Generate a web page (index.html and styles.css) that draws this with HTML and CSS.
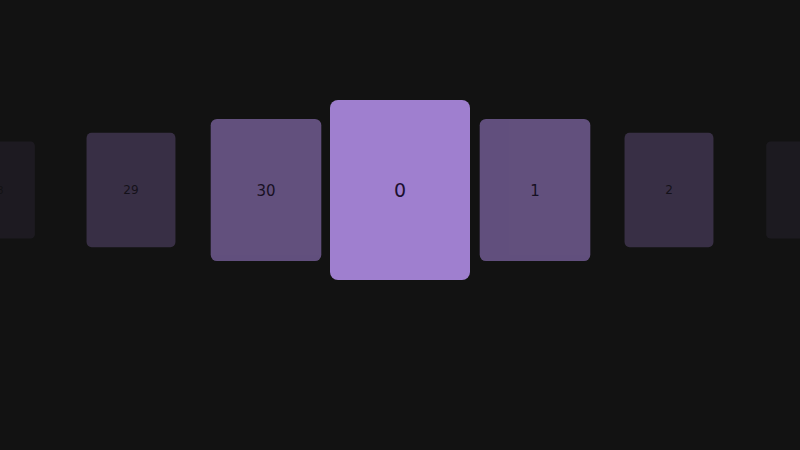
FILE: index.html
```html
<!DOCTYPE html>
<html lang="en">
<head>
<meta charset="utf-8">
<title>Carousel</title>
<link rel="stylesheet" href="styles.css">
</head>
<body>
<main class="stage">
  <div class="track">
    <div class="card far">28</div>
    <div class="card near2">29</div>
    <div class="card near1">30</div>
    <div class="card active">0</div>
    <div class="card near1">1</div>
    <div class="card near2">2</div>
    <div class="card far">3</div>
  </div>
</main>
</body>
</html>
```

FILE: styles.css
```css
html, body {
  margin: 0;
  padding: 0;
  background: #121212;
  width: 800px;
  height: 450px;
  overflow: hidden;
}

.stage {
  width: 800px;
  height: 450px;
  padding-top: 100px;
  box-sizing: border-box;
  overflow: hidden;
}

.track {
  display: flex;
  justify-content: center;
  align-items: center;
  width: 800px;
  height: 180px;
}

.card {
  flex: 0 0 140px;
  width: 140px;
  height: 180px;
  margin: 0 -2.75px;
  border-radius: 8px;
  background: #9f7fcf;
  color: #1c1030;
  font-family: "DejaVu Sans", "Liberation Sans", sans-serif;
  font-size: 19px;
  display: flex;
  align-items: center;
  justify-content: center;
  transform-origin: center center;
}

.active {
  transform: scale(1);
  opacity: 1;
}

.near1 {
  transform: scale(0.79);
  opacity: 0.57;
}

.near2 {
  transform: scale(0.635);
  opacity: 0.27;
}

.far {
  transform: scale(0.54);
  opacity: 0.08;
}
```
